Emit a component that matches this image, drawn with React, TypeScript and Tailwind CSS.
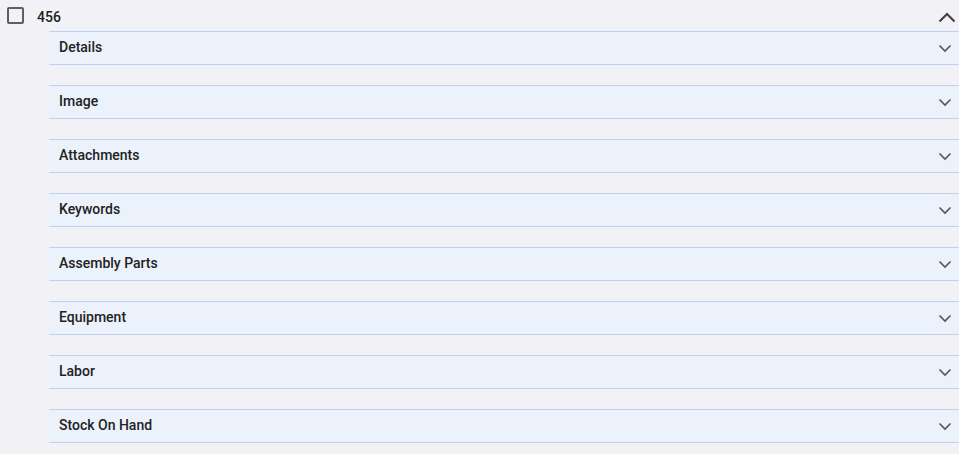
import React from 'react'

const sections = [
  'Details',
  'Image',
  'Attachments',
  'Keywords',
  'Assembly Parts',
  'Equipment',
  'Labor',
  'Stock On Hand',
]

function ChevronDown() {
  return (
    <svg width="14" height="9" viewBox="0 0 14 9" fill="none">
      <polyline points="1.5,1.5 7,7 12.5,1.5" stroke="#555" strokeWidth="1.6" />
    </svg>
  )
}

function ChevronUp() {
  return (
    <svg width="18" height="11" viewBox="0 0 18 11" fill="none">
      <polyline points="1.5,9.5 9,2 16.5,9.5" stroke="#444" strokeWidth="2.2" />
    </svg>
  )
}

export default function App() {
  return (
    <main
      className="min-h-screen w-full bg-[#f2f1f5] pb-[12px] text-[#222]"
      style={{ fontFamily: 'Roboto, "Noto Sans", sans-serif' }}
    >
      {/* Header row */}
      <div className="flex h-[31px] items-center pl-[7px] pr-[3px]">
        <div className="h-[17px] w-[17px] rounded-[2px] border-2 border-[#5f5f5f]" />
        <span className="ml-[13px] mt-[4px] text-[14px] font-medium text-[#222]">456</span>
        <div className="ml-auto mt-[4px] flex items-center">
          <ChevronUp />
        </div>
      </div>

      {/* Sections */}
      <div className="ml-[49px] flex flex-col gap-[20px]">
        {sections.map((name) => (
          <div
            key={name}
            className="flex h-[34px] items-center justify-between border-y border-[#bcd3ef] bg-[#ebf2fb] pl-[10px] pr-[7px]"
          >
            <span className="mb-[2px] text-[14px] font-medium text-[#222]">{name}</span>
            <ChevronDown />
          </div>
        ))}
      </div>
    </main>
  )
}
